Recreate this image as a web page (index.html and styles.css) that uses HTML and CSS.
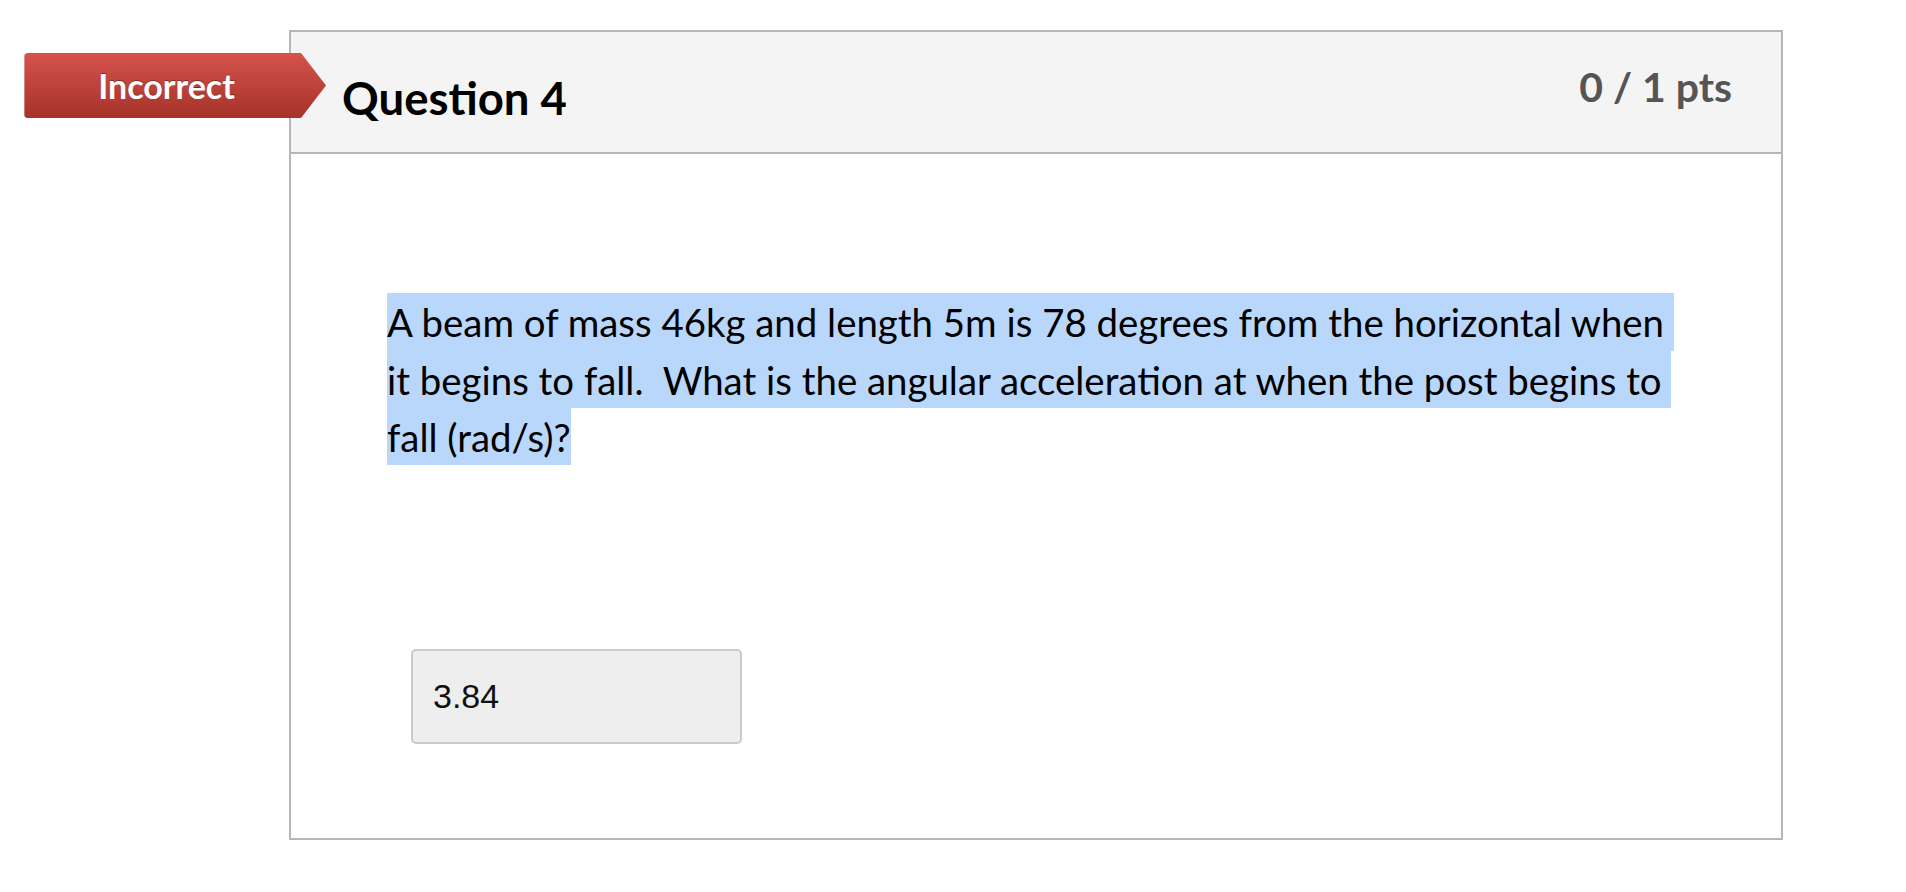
FILE: index.html
```html
<!DOCTYPE html>
<html lang="en">
<head>
    <meta charset="UTF-8">
    <meta name="viewport" content="width=device-width, initial-scale=1.0">
    <title>Question 4</title>
    <link rel="stylesheet" href="styles.css">
</head>
<body>
    <div class="question">
        <div class="answer-flag">Incorrect</div>
        <div class="header">
            <div class="name">Question 4</div>
            <div class="points">0 / 1 pts</div>
        </div>
        <div class="content">
            <p class="text"><span class="hl">A beam of mass 46kg and length 5m is 78 degrees from the horizontal when&nbsp;<br>it begins to fall.&nbsp; What is the angular acceleration at when the post begins to&nbsp;<br>fall (rad/s)?</span></p>
            <div class="answer">3.84</div>
        </div>
    </div>
</body>
</html>
```
FILE: styles.css
```css
body {
    margin: 0;
    background: #fff;
    font-family: Lato, "Liberation Sans", sans-serif;
    color: #000;
}
.question {
    position: relative;
    width: 1490px;
    margin: 30px 0 0 289px;
    border: 2px solid #b7b7b7;
}
.answer-flag {
    position: absolute;
    left: -267px;
    top: 21px;
    width: 302px;
    height: 65px;
    box-sizing: border-box;
    padding: 0 25px 0 8px;
    display: flex;
    align-items: center;
    justify-content: center;
    background: linear-gradient(#d5534b, #a5322a);
    border-radius: 4px 0 0 4px;
    clip-path: polygon(0 0, 277px 0, 302px 50%, 277px 100%, 0 100%);
    box-shadow: inset 7px 0 0 -6px rgba(255,255,255,0.35);
    color: #fff;
    font-size: 34px;
    font-weight: bold;
    text-shadow: 0 -1px 0 rgba(0,0,0,0.35);
}
.header {
    height: 120px;
    display: flex;
    justify-content: space-between;
    align-items: flex-start;
    background: #f4f4f4;
    border-bottom: 2px solid #b7b7b7;
    padding: 0 49px 0 51px;
}
.name {
    margin-top: 39px;
    font-size: 45.5px;
    font-weight: bold;
    line-height: 1.2;
}
.points {
    margin-top: 30px;
    font-size: 41px;
    font-weight: bold;
    line-height: 1.2;
    color: #555;
}
.content {
    padding: 140px 0 94px 96px;
}
.text {
    margin: 0;
    font-size: 38.4px;
    line-height: 57.3px;
}
.hl {
    background: #b9d6fb;
    padding: 5.6px 0;
}
.answer {
    width: 331px;
    height: 95px;
    box-sizing: border-box;
    margin: 183px 0 0 24px;
    padding-left: 20px;
    display: flex;
    align-items: center;
    background: #eee;
    border: 2px solid #cacaca;
    border-radius: 5px;
    font-family: "Liberation Sans", Arial, sans-serif;
    font-size: 34px;
    color: #111;
}
```
